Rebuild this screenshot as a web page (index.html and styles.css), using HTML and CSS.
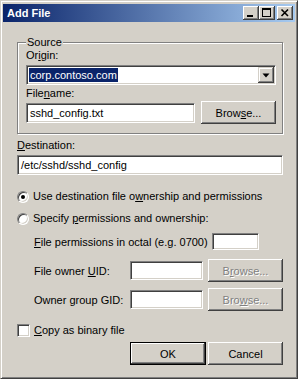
FILE: index.html
```html
<!DOCTYPE html>
<html>
<head>
<meta charset="utf-8">
<link rel="stylesheet" href="styles.css">
</head>
<body>
<div class="window">
  <div class="titlebar">
    <span class="title">Add File</span>
    <div class="caption">
      <span class="cbtn"><svg width="16" height="14" viewBox="0 0 16 14"><rect x="4" y="9" width="6" height="2" fill="#000"/></svg></span>
      <span class="cbtn"><svg width="16" height="14" viewBox="0 0 16 14"><path d="M3 2h9v9H3z M4 4h7v6H4z" fill="#000" fill-rule="evenodd"/></svg></span>
      <span class="cbtn close"><svg width="16" height="14" viewBox="0 0 16 14"><path d="M4.5 3.5 L11 10 M11 3.5 L4.5 10" stroke="#000" stroke-width="1.6" fill="none"/></svg></span>
    </div>
  </div>
  <div class="client">
    <div class="group">
      <span class="legend">Source</span>
      <span class="lbl">Or<u>i</u>gin:</span>
      <div class="combo">
        <span class="combo-field"><span class="sel">corp.contoso.com</span></span>
        <span class="dropbtn"><svg width="16" height="16" viewBox="0 0 16 16"><path d="M4.5 6.5h7l-3.5 4z" fill="#000"/></svg></span>
      </div>
      <span class="lbl lbl-file">File<u>n</u>ame:</span>
      <div class="row row-file">
        <div class="input grow">sshd_config.txt</div>
        <div class="btn btn-browse">Brow<u>s</u>e...</div>
      </div>
    </div>
    <span class="lbl lbl-dest"><u>D</u>estination:</span>
    <div class="input input-dest">/etc/sshd/sshd_config</div>
    <div class="option opt1"><span class="radio checked"></span><span>Use destination file o<u>w</u>nership and permissions</span></div>
    <div class="option opt2"><span class="radio"></span><span>Specify <u>p</u>ermissions and ownership:</span></div>
    <div class="row indent row-octal">
      <span><u>F</u>ile permissions in octal (e.g. 0700)</span>
      <div class="input input-octal"></div>
    </div>
    <div class="row indent row-uid">
      <span>File owner <u>U</u>ID:</span>
      <div class="input input-id"></div>
      <div class="btn disabled">B<u>r</u>owse...</div>
    </div>
    <div class="row indent row-gid">
      <span>Owner <u>g</u>roup GID:</span>
      <div class="input input-id"></div>
      <div class="btn disabled">Bro<u>w</u>se...</div>
    </div>
    <div class="option opt-check"><span class="checkbox"></span><span><u>C</u>opy as binary file</span></div>
    <div class="row actions">
      <div class="btn btn-default">OK</div>
      <div class="btn btn-cancel">Cancel</div>
    </div>
  </div>
</div>
</body>
</html>
```
FILE: styles.css
```css
body {
  margin: 0;
  background: #fff;
  font-family: "Liberation Sans", Arial, sans-serif;
  font-size: 11px;
  color: #000;
}
.window {
  width: 298px;
  height: 379px;
  box-sizing: border-box;
  background: #d4d0c8;
  border: 1px solid;
  border-color: #d4d0c8 #404040 #404040 #d4d0c8;
  box-shadow: inset 1px 1px #fff, inset -1px -1px #808080;
  padding: 3px 2px 2px 2px;
  display: flex;
  flex-direction: column;
}
.titlebar {
  height: 18px;
  display: flex;
  align-items: center;
  background: linear-gradient(90deg, #0a246a, #a6caf0);
  padding: 0 2px 0 4px;
}
.title {
  color: #fff;
  font-weight: bold;
  font-size: 11px;
}
.caption {
  margin-left: auto;
  display: flex;
}
.cbtn {
  display: block;
  width: 16px;
  height: 14px;
  background: #d4d0c8;
  box-shadow: inset -1px -1px #404040, inset 1px 1px #fff, inset -2px -2px #808080;
}
.cbtn svg { display: block; }
.cbtn.close { margin-left: 2px; }
.client {
  flex: 1;
  display: flex;
  flex-direction: column;
  padding: 20px 12px 0 14px;
}
.group {
  border: 1px solid #808080;
  box-shadow: inset 1px 1px #fff, 1px 1px #fff;
  padding: 0 6px 9px 8px;
  display: flex;
  flex-direction: column;
}
.legend {
  align-self: flex-start;
  margin-top: -7px;
  line-height: 13px;
  padding: 0 1px;
  background: #d4d0c8;
}
.lbl {
  line-height: 13px;
  align-self: flex-start;
}
.lbl-file { margin-top: 2px; }
.lbl-dest { margin-top: 5px; }
.combo {
  margin-top: 3px;
  height: 20px;
  box-sizing: border-box;
  background: #fff;
  border: 1px solid;
  border-color: #808080 #fff #fff #808080;
  box-shadow: inset 1px 1px #404040, inset -1px -1px #d4d0c8;
  padding: 1px;
  display: flex;
}
.combo-field {
  flex: 1;
  display: flex;
  align-items: center;
  padding-left: 1px;
}
.sel {
  background: #0a246a;
  color: #fff;
  line-height: 14px;
  padding: 0 1px;
}
.dropbtn {
  width: 16px;
  height: 16px;
  background: #d4d0c8;
  box-shadow: inset -1px -1px #404040, inset 1px 1px #d4d0c8, inset -2px -2px #808080, inset 2px 2px #fff;
}
.dropbtn svg { display: block; }
.row {
  display: flex;
  align-items: center;
}
.row-file { margin-top: 1px; }
.input {
  height: 20px;
  box-sizing: border-box;
  background: #fff;
  border: 1px solid;
  border-color: #808080 #fff #fff #808080;
  box-shadow: inset 1px 1px #404040, inset -1px -1px #d4d0c8;
  padding: 0 2px 0 3px;
  line-height: 18px;
  white-space: nowrap;
}
.grow { flex: 1; }
.btn {
  width: 75px;
  height: 23px;
  box-sizing: border-box;
  background: #d4d0c8;
  box-shadow: inset -1px -1px #404040, inset 1px 1px #fff, inset -2px -2px #808080, inset 2px 2px #d4d0c8;
  display: flex;
  align-items: center;
  justify-content: center;
  flex-shrink: 0;
}
.btn-browse { margin-left: 6px; }
.btn.disabled {
  color: #808080;
  text-shadow: 1px 1px #fff;
  margin-left: 5px;
}
.input-dest { margin-top: 3px; }
.option {
  display: flex;
  align-items: center;
  line-height: 13px;
}
.opt1 { margin-top: 15px; }
.opt2 { margin-top: 9px; }
.radio {
  width: 12px;
  height: 12px;
  box-sizing: border-box;
  border-radius: 50%;
  background: #fff;
  border: 1px solid;
  border-color: #808080 #fff #fff #808080;
  box-shadow: inset 1px 1px #404040, inset -1px -1px #d4d0c8;
  margin-right: 4px;
  display: flex;
  align-items: center;
  justify-content: center;
}
.radio.checked::after {
  content: "";
  width: 4px;
  height: 4px;
  border-radius: 50%;
  background: #000;
}
.indent { padding-left: 17px; }
.row-octal { margin-top: 8px; }
.input-octal {
  width: 47px;
  height: 17px;
  margin-left: auto;
  margin-right: 24px;
}
.row-uid { margin-top: 9px; }
.row-gid { margin-top: 6px; }
.input-id {
  width: 73px;
  height: 19px;
  margin-left: auto;
}
.opt-check { margin-top: 13px; }
.checkbox {
  width: 13px;
  height: 13px;
  box-sizing: border-box;
  background: #fff;
  border: 1px solid;
  border-color: #808080 #fff #fff #808080;
  box-shadow: inset 1px 1px #404040, inset -1px -1px #d4d0c8;
  margin-right: 4px;
}
.actions {
  margin-top: 5px;
  justify-content: flex-end;
}
.btn-default {
  width: 76px;
  box-shadow: inset 0 0 0 1px #000, inset -2px -2px #404040, inset 2px 2px #fff, inset -3px -3px #808080;
}
.btn-cancel { margin-left: 2px; }
```
